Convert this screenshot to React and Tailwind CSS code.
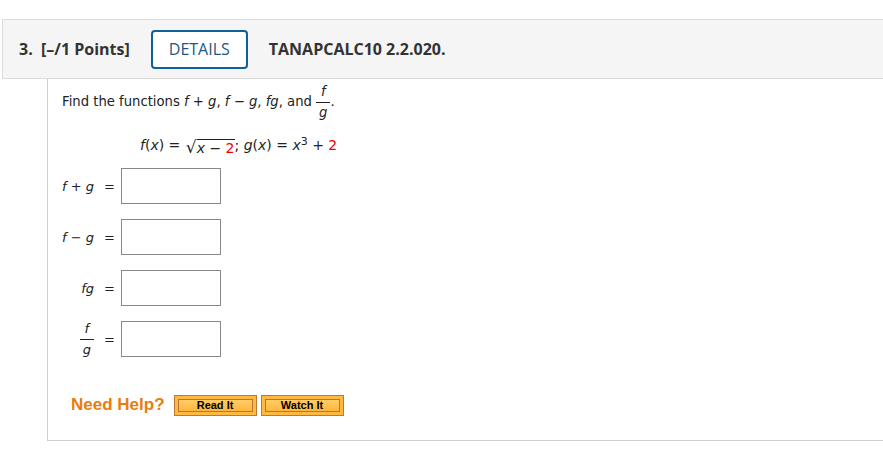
import React from 'react';

const mathFont = { fontFamily: '"DejaVu Sans", Verdana, sans-serif' };

const Frac = ({ top, bottom, className = '' }) => (
    <span className={`inline-flex flex-col items-center align-middle leading-none ${className}`}>
        <span className="px-[3px] pb-[4px]">{top}</span>
        <span className="w-full border-t border-[#222]" />
        <span className="px-[3px] pt-[3px]">{bottom}</span>
    </span>
);

const AnswerRow = ({ label }) => (
    <div className="flex items-center h-[36px]">
        <div className="w-[32px] flex justify-end">{label}</div>
        <span className="ml-[10px] w-[8px] text-center">=</span>
        <div className="ml-[9px] w-[100px] h-[36px] border border-[#888] bg-white" />
    </div>
);

const HelpButton = ({ children }) => (
    <button className="h-[21px] w-[83px] border border-[#c0782e] bg-[#ffb943] p-[3px]">
        <span className="flex items-center justify-center h-full border border-[#b37838] bg-gradient-to-b from-[#ffcd66] to-[#ffb53a] text-[11px] font-bold text-black leading-none" style={{ fontFamily: '"Liberation Sans", Arial, sans-serif' }}>
            {children}
        </span>
    </button>
);

export default function App() {
    return (
        <div className="w-[883px] h-[474px] bg-white overflow-hidden pt-[19px] pl-[2px]">
            {/* Question header */}
            <div className="h-[60px] flex items-center bg-[#f5f5f5] border-y border-l border-[#dcdcdc] text-[#333] text-[16px]" style={{ fontFamily: '"Open Sans", sans-serif' }}>
                <span className="ml-[16px] font-bold">3.&nbsp; [–/1 Points]</span>
                <span className="ml-[21px] h-[39px] w-[97px] flex items-center justify-center rounded-[4px] border-2 border-[#0e6196] bg-white text-[#245785]">DETAILS</span>
                <span className="ml-[21px] font-bold">TANAPCALC10 2.2.020.</span>
            </div>

            {/* Question body */}
            <div className="ml-[45px] h-[362px] border-l border-b border-[#cfcfcf] pl-[14px] text-[13px] text-[#222]" style={mathFont}>
                <div className="pt-[6px] flex items-center text-[13.2px]">
                    <span>Find the functions <i>f</i> + <i>g</i>, <i>f</i> − <i>g</i>, <i>fg</i>, and&nbsp;</span>
                    <Frac top={<i>f</i>} bottom={<i>g</i>} />
                    <span>.</span>
                </div>

                <div className="mt-[15px] ml-[78px] flex items-end h-[22px] text-[14px] whitespace-pre">
                    <span><i>f</i>(<i>x</i>) = </span>
                    <span className="ml-[1px] text-[17px] leading-none">√</span>
                    <span className="border-t border-[#222] leading-[16px]"><i>x</i> − <span className="text-[#e00]">2</span></span>
                    <span>; <i>g</i>(<i>x</i>) = <i>x</i><sup className="text-[11px]">3</sup> + <span className="text-[#e00]">2</span></span>
                </div>

                <div className="mt-[12px] flex flex-col gap-[15px]">
                    <AnswerRow label={<span><i>f</i> + <i>g</i></span>} />
                    <AnswerRow label={<span><i>f</i> − <i>g</i></span>} />
                    <AnswerRow label={<i>fg</i>} />
                    <AnswerRow label={<Frac top={<i>f</i>} bottom={<i>g</i>} />} />
                </div>

                <div className="mt-[35px] ml-[9px] flex items-center">
                    <span className="text-[17px] font-bold text-[#e87d0d]" style={{ fontFamily: '"Liberation Sans", Arial, sans-serif' }}>Need Help?</span>
                    <div className="ml-[9px] flex gap-[4px]">
                        <HelpButton>Read It</HelpButton>
                        <HelpButton>Watch It</HelpButton>
                    </div>
                </div>
            </div>
        </div>
    );
}
